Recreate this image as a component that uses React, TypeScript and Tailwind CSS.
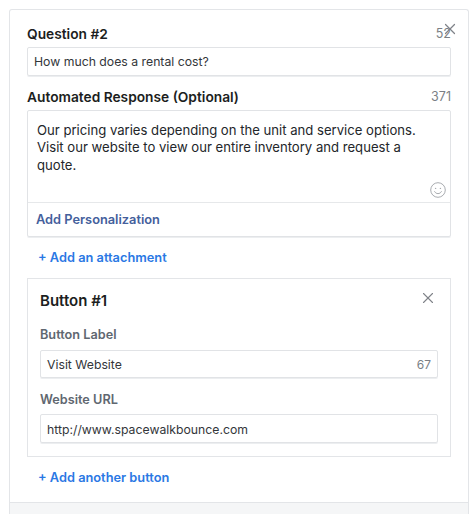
import { X } from 'lucide-react';

function Smiley() {
  return (
    <svg width="16" height="16" viewBox="0 0 16 16" fill="none" stroke="#a9acb0" strokeWidth="1">
      <circle cx="8" cy="8" r="7.3" />
      <circle cx="5.6" cy="6.4" r="0.7" fill="#a9acb0" stroke="none" />
      <circle cx="10.4" cy="6.4" r="0.7" fill="#a9acb0" stroke="none" />
      <path d="M4.6 9.6c.8 1.4 2 2 3.4 2s2.6-.6 3.4-2" strokeLinecap="round" />
    </svg>
  );
}

export default function App() {
  return (
    <div className="h-[520px] w-[474px] overflow-hidden bg-white pl-[9px] pr-[5px] pt-[9px] font-['Inter',sans-serif] text-[#1c1e21]">
      <div className="relative flex h-[505px] flex-col rounded-t-[3px] border-x border-t border-[#e3e5e8]">
        {/* Close */}
        <X size={18} strokeWidth={1.6} className="absolute right-[9px] top-[10px] text-[#7f8389]" />

        <div className="flex-1 px-[17px] pt-[13px]">
          {/* Question */}
          <div className="flex h-[21px] items-center justify-between pt-[2px]">
            <span className="text-[13.75px] font-semibold">Question #2</span>
            <span className="text-[12.5px] text-[#7b7f85]">52</span>
          </div>
          <div className="mt-[3px] flex h-[29px] items-center rounded-[2px] border border-[#e1e3e6] px-[6px] pt-[2px] text-[12.25px] text-[#33363a] shadow-[0_1px_0_#eceef0]">
            How much does a rental cost?
          </div>

          {/* Automated response */}
          <div className="mt-[10px] flex h-[21px] items-center justify-between pt-[2px]">
            <span className="text-[13.75px] font-semibold">Automated Response (Optional)</span>
            <span className="text-[12.5px] text-[#7b7f85]">371</span>
          </div>
          <div className="mt-[3px] rounded-[2px] border border-[#e1e3e6] shadow-[0_1px_0_#eceef0]">
            <div className="relative h-[91px] whitespace-nowrap px-[9px] pt-[10.5px] text-[13.12px] leading-[17.5px] text-[#23262a]">
              Our pricing varies depending on the unit and service options.
              <br />
              Visit our website to view our entire inventory and request a
              <br />
              quote.
              <span className="absolute bottom-[4px] right-[4px]">
                <Smiley />
              </span>
            </div>
            <div className="flex h-[34px] items-center border-t border-[#e6e8ea] px-[8px] text-[12.8px] font-semibold text-[#44609c]">
              Add Personalization
            </div>
          </div>

          <div className="mt-[12px] h-[17px] pl-[11px] text-[12.8px] font-semibold leading-[18px] text-[#2a78e4]">+ Add an attachment</div>

          {/* Button card */}
          <div className="mt-[12px] border border-[#e3e5e8] px-[12px] pt-[11px]">
            <div className="flex h-[20px] items-center justify-between pt-[2px]">
              <span className="text-[15px] font-semibold">Button #1</span>
              <X size={18} strokeWidth={1.5} className="mr-[1px] -mt-[7px] text-[#7f8389]" />
            </div>
            <div className="mt-[16px] h-[17px] text-[12.7px] font-semibold leading-[18px] text-[#606770]">Button Label</div>
            <div className="mt-[7px] flex h-[28px] items-center justify-between rounded-[2px] border border-[#e1e3e6] px-[6px] pt-[2px] text-[12.25px] text-[#33363a] shadow-[0_1px_0_#eceef0]">
              <span>Visit Website</span>
              <span className="text-[12px] text-[#7b7f85]">67</span>
            </div>
            <div className="mt-[13px] h-[17px] text-[12.7px] font-semibold leading-[18px] text-[#606770]">Website URL</div>
            <div className="mb-[13px] mt-[6px] flex h-[29px] items-center rounded-[2px] border border-[#e1e3e6] px-[6px] pt-[3px] text-[12.25px] text-[#33363a] shadow-[0_1px_0_#eceef0]">
              http://www.spacewalkbounce.com
            </div>
          </div>

          <div className="mt-[12px] h-[17px] pl-[11px] text-[12.8px] font-semibold leading-[18px] text-[#2a78e4]">+ Add another button</div>
        </div>

        {/* Footer */}
        <div className="h-[12px] shrink-0 border-t border-[#e3e5e8] bg-[#f5f6f7]" />
      </div>
    </div>
  );
}
